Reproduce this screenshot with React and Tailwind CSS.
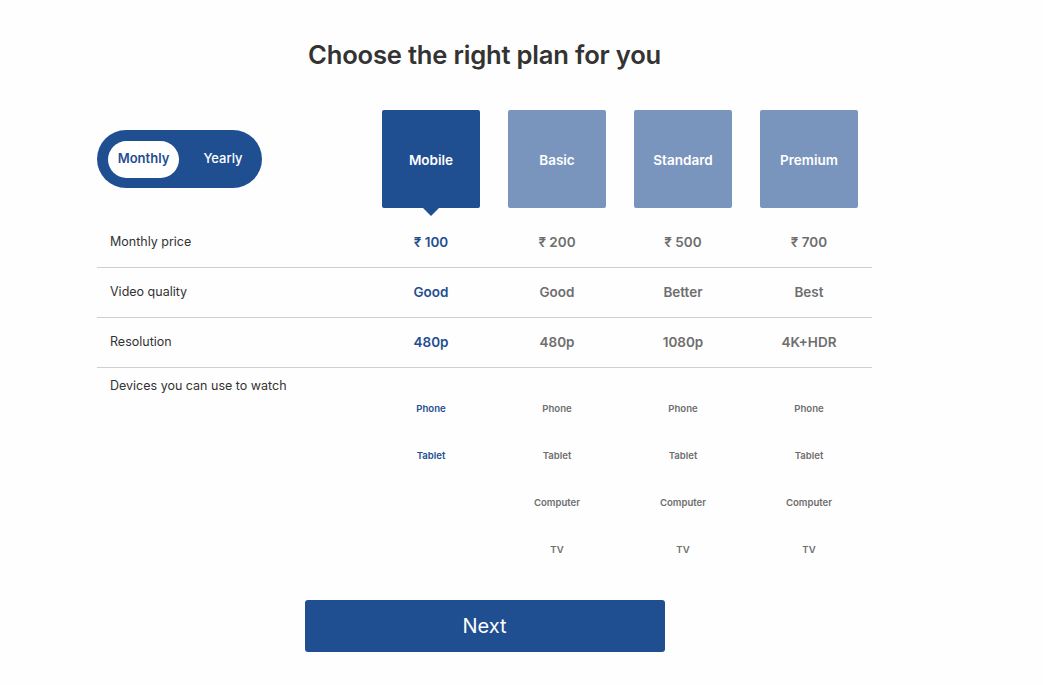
import { useState } from "react";

const plans = [
  { name: "Mobile", price: "₹ 100", quality: "Good", res: "480p", devices: ["Phone", "Tablet"] },
  { name: "Basic", price: "₹ 200", quality: "Good", res: "480p", devices: ["Phone", "Tablet", "Computer", "TV"] },
  { name: "Standard", price: "₹ 500", quality: "Better", res: "1080p", devices: ["Phone", "Tablet", "Computer", "TV"] },
  { name: "Premium", price: "₹ 700", quality: "Best", res: "4K+HDR", devices: ["Phone", "Tablet", "Computer", "TV"] },
];

export default function App() {
  const [selected, setSelected] = useState(0);
  const [yearly, setYearly] = useState(false);

  const rows = [
    { label: "Monthly price", key: "price" },
    { label: "Video quality", key: "quality" },
    { label: "Resolution", key: "res" },
  ];

  return (
    <div className="min-h-screen bg-[#fefefe] font-['Inter',sans-serif] text-[#333]">
      <div className="ml-[97px] w-[775px] pt-[39px]">
        {/* titulo */}
        <h1 className="text-center text-[25.6px] leading-[32px] font-semibold tracking-[-0.2px] text-[#333]">
          Choose the right plan for you
        </h1>

        {/* cabecera */}
        <div className="mt-[39px] flex h-[108px]">
          <div className="w-[271px] flex items-start pt-[20px]">
            <div className="flex h-[58px] w-[165px] items-center rounded-full bg-[#1f4e91] px-[11px]">
              <button
                onClick={() => setYearly(false)}
                className={`h-[37px] w-[71px] rounded-full text-[13px] font-semibold ${
                  !yearly ? "bg-white text-[#1f4e91]" : "text-white font-medium"
                }`}
              >
                Monthly
              </button>
              <button
                onClick={() => setYearly(true)}
                className={`h-[37px] flex-1 rounded-full pl-[16px] text-[13px] ${
                  yearly ? "bg-white text-[#1f4e91] font-semibold" : "text-white font-medium"
                }`}
              >
                Yearly
              </button>
            </div>
          </div>
          {plans.map((p, i) => (
            <div key={p.name} className="flex w-[126px] justify-center">
              <button
                onClick={() => setSelected(i)}
                className={`relative flex h-[98px] w-[98px] items-center justify-center rounded-[2px] pt-[2px] text-[13.5px] font-semibold text-white ${
                  selected === i ? "bg-[#1f4e91]" : "bg-[#7995be]"
                }`}
              >
                {p.name}
                {selected === i && (
                  <span className="absolute left-1/2 top-full -translate-x-1/2 border-x-[8px] border-t-[8px] border-x-transparent border-t-[#1f4e91]" />
                )}
              </button>
            </div>
          ))}
        </div>

        {/* filas */}
        {rows.map((r) => (
          <div key={r.key} className="flex h-[50px] items-center border-b border-[#cfcfcf]">
            <div className="w-[271px] pl-[13px] text-[12.5px]">{r.label}</div>
            {plans.map((p, i) => (
              <div
                key={p.name}
                className={`w-[126px] text-center text-[13.5px] font-semibold ${
                  selected === i ? "text-[#1f4e91]" : "text-[#6e6e6e]"
                }`}
              >
                {p[r.key]}
              </div>
            ))}
          </div>
        ))}

        <div className="flex">
          <div className="w-[271px] pl-[13px] pt-[9px] text-[12.5px] leading-[18px]">
            Devices you can use to watch
          </div>
          {plans.map((p, i) => (
            <div key={p.name} className="w-[126px] pt-[18px]">
              {p.devices.map((d) => (
                <div
                  key={d}
                  className={`flex h-[47px] items-center justify-center text-[9.6px] font-semibold ${
                    selected === i ? "text-[#1f4e91]" : "text-[#6e6e6e]"
                  }`}
                >
                  {d}
                </div>
              ))}
            </div>
          ))}
        </div>

        <div className="mt-[26px] flex justify-center">
          <button className="h-[52px] w-[360px] rounded-[3px] bg-[#1f4e91] text-[20px] text-white">
            Next
          </button>
        </div>
      </div>
    </div>
  );
}
